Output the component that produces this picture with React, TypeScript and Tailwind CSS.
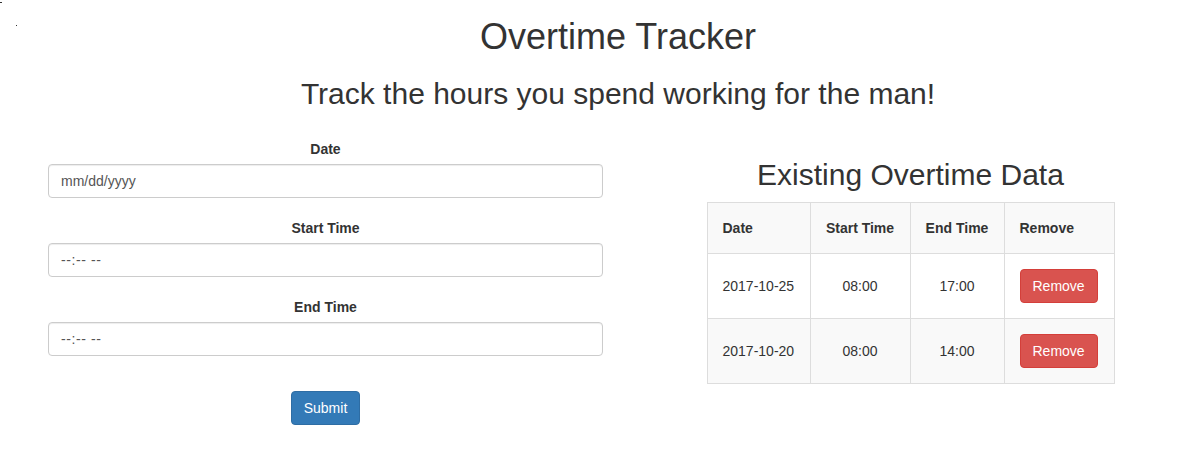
import React from "react";

const rows = [
  { date: "2017-10-25", start: "08:00", end: "17:00" },
  { date: "2017-10-20", start: "08:00", end: "14:00" },
];

function Field({ label, value, spaced }: { label: string; value: string; spaced?: boolean }) {
  return (
    <div className="mb-[20px]">
      <label className="block text-center font-bold text-[14px] leading-[20px] mb-[5px]">
        {label}
      </label>
      <input
        readOnly
        value={value}
        className={
          "block w-full h-[34px] px-[12px] text-[14px] text-[#555] bg-white border border-[#ccc] rounded-[4px] shadow-[inset_0_1px_1px_rgba(0,0,0,0.075)] outline-none" +
          (spaced ? " tracking-[0.6px]" : "")
        }
      />
    </div>
  );
}

export default function App() {
  return (
    <div
      className="relative w-full overflow-hidden bg-white text-[#333] text-[14px] leading-[20px] min-h-[462px]"
      style={{ fontFamily: '"Liberation Sans", Arial, sans-serif' }}
    >
      <span className="absolute left-0 top-[2px] w-[2px] h-[1px] bg-[#333]" />
      <span className="absolute left-[16px] top-[25px] w-[1px] h-[1px] bg-[#333]" />

      <div className="w-[1170px] ml-[33px]">
        <h1 className="text-center text-[36px] leading-[1.1] mt-[17px]">Overtime Tracker</h1>
        <h2 className="text-center text-[30px] leading-[1.1] mt-[20px]">
          Track the hours you spend working for the man!
        </h2>

        <div className="flex mt-[29px]">
          <div className="w-1/2 px-[15px]">
            <form onSubmit={(e) => e.preventDefault()}>
              <Field label="Date" value="mm/dd/yyyy" />
              <Field label="Start Time" value="--:-- --" spaced />
              <Field label="End Time" value="--:-- --" spaced />
              <div className="flex justify-center mt-[35px]">
                <button
                  type="submit"
                  className="h-[34px] px-[12px] text-[14px] text-white bg-[#337ab7] border border-[#2e6da4] rounded-[4px]"
                >
                  Submit
                </button>
              </div>
            </form>
          </div>

          <div className="w-1/2 px-[15px] flex flex-col items-center">
            <h2 className="text-[30px] leading-[1.1] mt-[19px] mb-[11px]">Existing Overtime Data</h2>
            <table className="border-collapse border border-[#ddd]">
              <thead>
                <tr className="bg-[#f9f9f9]">
                  <th className="w-[103px] p-[15px] text-left font-bold border border-[#ddd]">Date</th>
                  <th className="w-[100px] p-[15px] text-center font-bold border border-[#ddd]">Start Time</th>
                  <th className="w-[94px] p-[15px] text-center font-bold border border-[#ddd]">End Time</th>
                  <th className="w-[110px] p-[15px] text-left font-bold border border-[#ddd]">Remove</th>
                </tr>
              </thead>
              <tbody>
                {rows.map((r, i) => (
                  <tr key={r.date} className={i % 2 === 1 ? "bg-[#f9f9f9]" : "bg-white"}>
                    <td className="p-[15px] text-left border border-[#ddd]">{r.date}</td>
                    <td className="p-[15px] text-center border border-[#ddd]">{r.start}</td>
                    <td className="p-[15px] text-center border border-[#ddd]">{r.end}</td>
                    <td className="p-[15px] border border-[#ddd]">
                      <button className="h-[34px] px-[12px] text-[14px] text-white bg-[#d9534f] border border-[#d43f3a] rounded-[4px]">
                        Remove
                      </button>
                    </td>
                  </tr>
                ))}
              </tbody>
            </table>
          </div>
        </div>
      </div>
    </div>
  );
}
